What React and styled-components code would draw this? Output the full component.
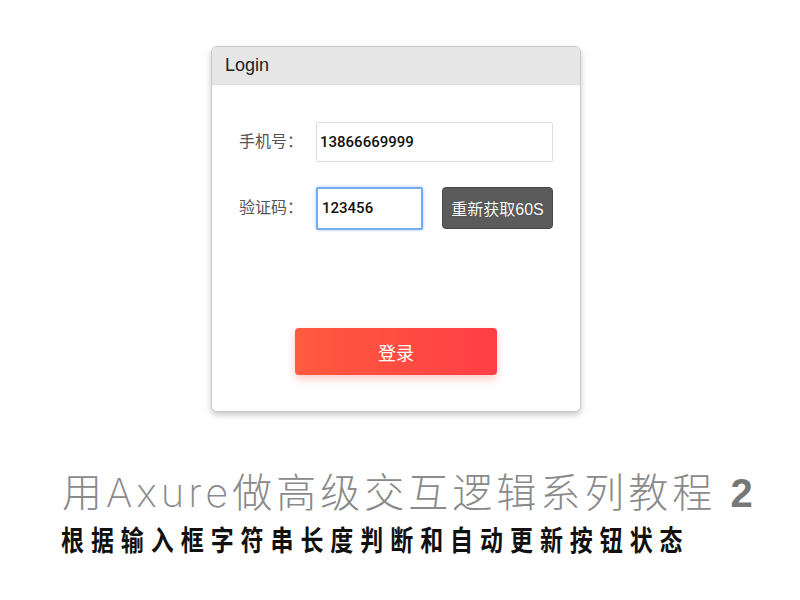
import React from "react";
import styled, { createGlobalStyle } from "styled-components";

const Global = createGlobalStyle`
  html, body { margin: 0; padding: 0; background: #ffffff; }
  body { width: 800px; height: 600px; overflow: hidden; font-family: "Liberation Sans", "Noto Sans CJK SC", sans-serif; }
  * { box-sizing: border-box; }
`;

const Page = styled.div`
  padding-top: 46px;
  display: flex;
  flex-direction: column;
`;

const Card = styled.div`
  margin-left: 211px;
  width: 370px;
  border: 1px solid #c9c9c9;
  border-radius: 6px;
  background: #fff;
  box-shadow: 0 3px 6px rgba(0, 0, 0, 0.22);
  overflow: hidden;
`;

const Header = styled.div`
  height: 38px;
  background: #e6e6e6;
  border-bottom: 1px solid #dedede;
  display: flex;
  align-items: center;
  padding-left: 13px;
  font-family: "Liberation Sans", sans-serif;
  font-size: 18px;
  color: #222;
`;

const Body = styled.div`
  padding: 37px 0 36px 26px;
  display: flex;
  flex-direction: column;
`;

const Row = styled.div`
  display: flex;
  align-items: center;
  height: ${(p) => p.$h}px;
  margin-bottom: ${(p) => p.$mb || 0}px;
`;

const Label = styled.div`
  width: 78px;
  padding-left: 1px;
  font-family: "Noto Sans CJK SC", sans-serif;
  font-size: 16px;
  color: #555;
  padding-bottom: 4px;
`;

const Field = styled.input`
  width: ${(p) => p.$w}px;
  height: ${(p) => p.$h}px;
  border: ${(p) => (p.$focus ? "2px solid #74acef" : "1px solid #dcdcdc")};
  box-shadow: ${(p) => (p.$focus ? "0 0 3px rgba(70, 140, 240, 0.55)" : "none")};
  border-radius: 2px;
  padding: 0 0 0 ${(p) => (p.$focus ? 4 : 3)}px;
  font-family: "Roboto", "Liberation Sans", sans-serif;
  font-size: 15px;
  font-weight: 500;
  color: #111;
  background: #fff;
  outline: none;
`;

const ResendButton = styled.button`
  margin-left: 19px;
  width: 111px;
  height: 42px;
  border: 1px solid #474747;
  border-radius: 4px;
  background: #5b5b5b;
  color: #fff;
  font-family: "Liberation Sans", "Noto Sans CJK SC", sans-serif;
  font-size: 16px;
  padding: 0;
  text-shadow: 0 0 1px rgba(0, 0, 0, 0.5);
`;

const LoginButton = styled.button`
  margin-top: 99px;
  margin-left: 57px;
  width: 202px;
  height: 47px;
  border: none;
  border-radius: 4px;
  background: linear-gradient(90deg, #ff5b3e 0%, #ff3e46 100%);
  box-shadow: 0 4px 8px rgba(255, 80, 60, 0.3);
  color: #fff;
  font-family: "Noto Sans CJK SC", sans-serif;
  font-size: 18px;
  padding: 0;
`;

const Title = styled.div`
  margin-top: 57px;
  margin-left: 62px;
  font-family: "Inter", "Noto Sans CJK SC", sans-serif;
  font-weight: 200;
  font-size: 40px;
  line-height: 48px;
  letter-spacing: 4px;
  color: #8a8a8a;
  white-space: nowrap;
`;

const Num = styled.span`
  margin-left: 14px;
  font-family: "Liberation Sans", sans-serif;
  font-weight: 700;
  color: #777;
  letter-spacing: 0;
`;

const Subtitle = styled.div`
  margin-top: 6px;
  margin-left: 61px;
  font-family: "Noto Sans CJK SC", sans-serif;
  font-weight: 700;
  font-size: 28px;
  line-height: 32px;
  letter-spacing: 8.5px;
  color: #111;
  white-space: nowrap;
  transform: scaleX(0.82);
  transform-origin: left center;
`;

export default function App() {
  return (
    <>
      <Global />
      <Page>
        <Card>
          <Header>Login</Header>
          <Body>
            <Row $h={40} $mb={25}>
              <Label>手机号：</Label>
              <Field $w={237} $h={40} value="13866669999" readOnly />
            </Row>
            <Row $h={42}>
              <Label>验证码：</Label>
              <Field $w={107} $h={43} $focus value="123456" readOnly />
              <ResendButton>重新获取60S</ResendButton>
            </Row>
            <LoginButton>登录</LoginButton>
          </Body>
        </Card>
        <Title>
          用Axure做高级交互逻辑系列教程<Num>2</Num>
        </Title>
        <Subtitle>根据输入框字符串长度判断和自动更新按钮状态</Subtitle>
      </Page>
    </>
  );
}
